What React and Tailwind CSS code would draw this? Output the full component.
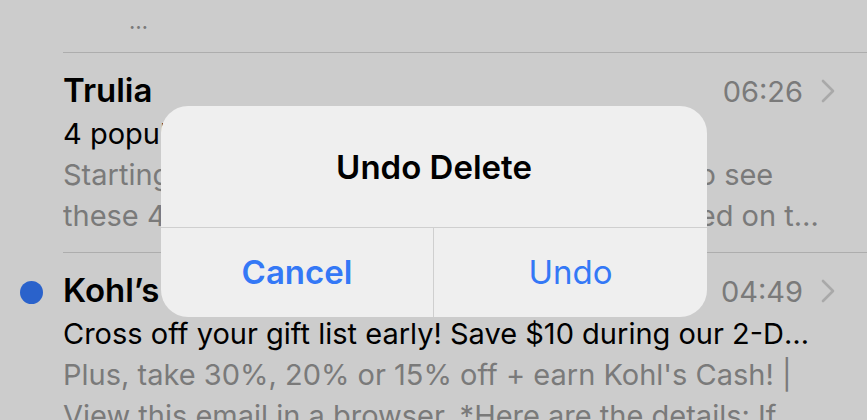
const Chevron = () => (
  <svg width="16" height="24" viewBox="0 0 16 24" fill="none" className="shrink-0">
    <path d="M3 2 L13 12 L3 22" stroke="#a9a9a9" strokeWidth="2.6" strokeLinecap="round" strokeLinejoin="round" />
  </svg>
);

const MailRow = ({ sender, time, unread, subject, preview, last }) => (
  <div className="flex">
    <div className="w-[63px] shrink-0 pt-[28px] pl-[20px]">
      {unread && <div className="h-[23px] w-[23px] rounded-full bg-[#2a62cb]"></div>}
    </div>
    <div className={"min-w-0 flex-1 pt-[16px] pb-[16px] pr-[31px] " + (last ? "" : "border-b border-[#adadad]")}>
      <div className="flex items-baseline">
        <span className="flex-1 truncate text-[33px] leading-[42px] font-semibold text-black">{sender}</span>
        <span className="text-[29px] leading-[42px] text-[#7a7a7a]">{time}</span>
        <span className="ml-[17px] self-center">
          <Chevron />
        </span>
      </div>
      <div className="mr-[16px] truncate text-[29px] leading-[41px] text-black">{subject}</div>
      {preview.map((line, i) => (
        <div key={i} className="mr-[16px] truncate text-[29px] leading-[41px] text-[#7a7a7a]">
          {line}
        </div>
      ))}
    </div>
  </div>
);

export default function App() {
  return (
    <div className="relative h-[420px] w-[867px] overflow-hidden bg-[#cccccc] font-['Inter',sans-serif]">
      <div className="flex">
        <div className="w-[63px] shrink-0"></div>
        <div className="h-[53px] flex-1 border-b border-[#adadad]">
          <div className="pl-[66px] pt-[6px] text-[22px] leading-[30px] text-[#7a7a7a]">…</div>
        </div>
      </div>

      <MailRow
        sender="Trulia"
        time="06:26"
        subject="4 popular homes in your area"
        preview={[
          "Starting at $99K, sign in to your account now to see",
          "these 4 homes we've hand-picked for you based on the homes you viewed",
        ]}
      />
      <MailRow
        sender="Kohl’s"
        time="04:49"
        unread
        subject="Cross off your gift list early! Save $10 during our 2-Day Sale"
        preview={[
          "Plus, take 30%, 20% or 15% off + earn Kohl's Cash! |",
          "View this email in a browser. *Here are the details: If you",
        ]}
        last
      />

      {/* alert */}
      <div className="absolute left-[161px] top-[106px] w-[546px] overflow-hidden rounded-[27px] bg-[#efefef]">
        <div className="flex h-[122px] items-center justify-center border-b border-[#cfcfcf] pt-[2px]">
          <span className="text-[33px] font-semibold text-black">Undo Delete</span>
        </div>
        <div className="flex h-[89px]">
          <button className="flex flex-1 items-center justify-center border-r border-[#cfcfcf] text-[33px] font-semibold text-[#3478f6]">
            Cancel
          </button>
          <button className="flex w-[273px] items-center justify-center text-[33px] text-[#3478f6]">
            Undo
          </button>
        </div>
      </div>
    </div>
  );
}
